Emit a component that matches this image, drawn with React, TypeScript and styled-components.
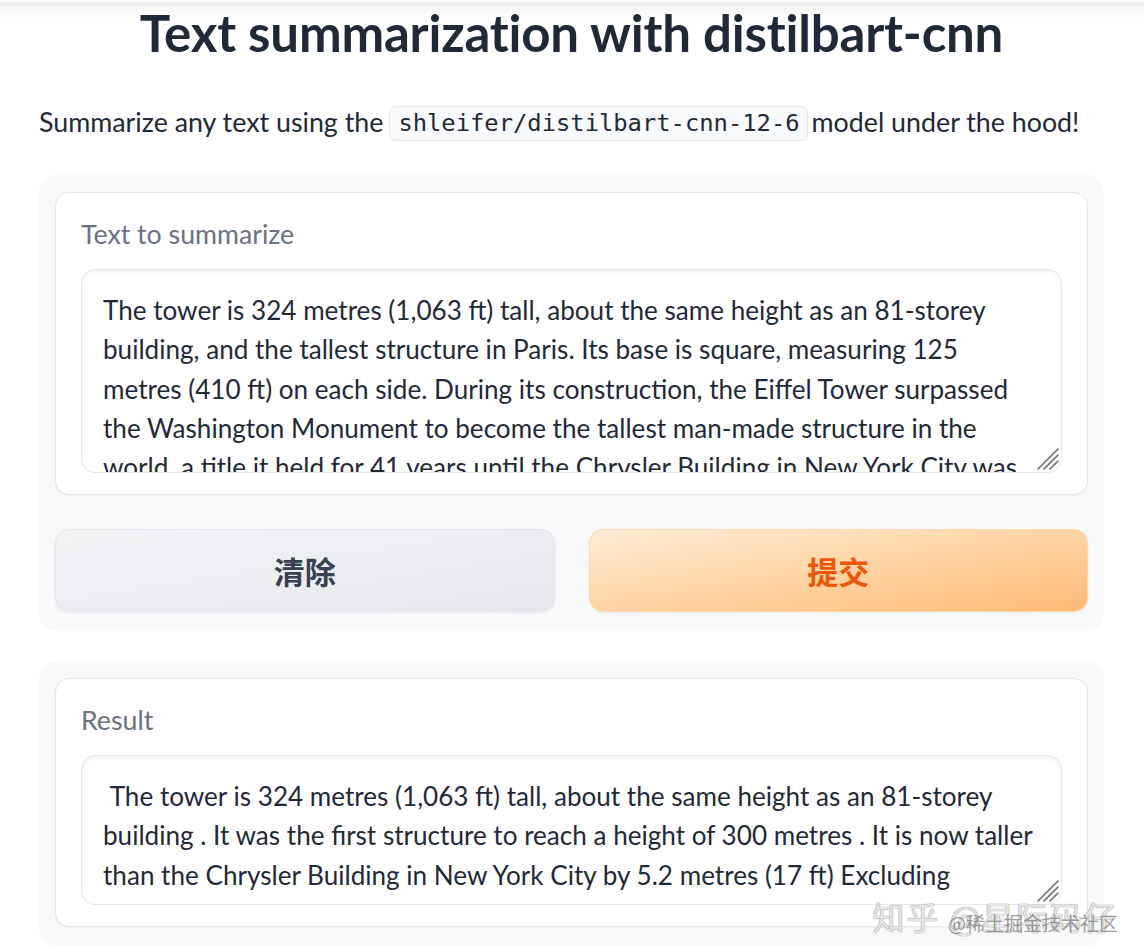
import React from "react";
import styled, { createGlobalStyle } from "styled-components";

const Global = createGlobalStyle`
  html, body { margin: 0; padding: 0; background: #ffffff; }
  body {
    font-family: "Lato", "Noto Sans CJK SC", sans-serif;
    color: #1f2937;
    -webkit-font-smoothing: antialiased;
  }
`;

const Page = styled.div`
  width: 1144px;
  min-height: 952px;
  box-sizing: border-box;
  padding: 0 40px 0 39px;
  background: linear-gradient(to bottom, #ffffff 0px, #ffffff 2px, #e9e9ea 3px, #f6f6f7 8px, #ffffff 18px);
  overflow: hidden;
`;

const Title = styled.h1`
  margin: 0;
  padding-top: 3px;
  text-align: center;
  font-family: "Lato", sans-serif;
  font-weight: 700;
  font-size: 51px;
  line-height: 60px;
  color: #1f2937;
  letter-spacing: -0.2px;
`;

const Subtitle = styled.p`
  margin: 40px 0 0;
  text-align: left;
  font-size: 26.8px;
  line-height: 38px;
  color: #1f2937;
`;

const Code = styled.code`
  display: inline-block;
  font-family: "DejaVu Sans Mono", "Liberation Mono", monospace;
  font-size: 23.8px;
  line-height: 33px;
  padding: 0 7px 0 8px;
  margin: 0 4px 0 6px;
  background: #f9fafb;
  border: 1px solid #e5e7eb;
  border-radius: 7px;
  color: #1f2937;
  vertical-align: 1px;
`;

const Panel = styled.section<{ $mt: number }>`
  position: relative;
  margin-top: ${(p) => p.$mt}px;
  background: #f8f9fb;
  border-radius: 18px;
  padding: 17px 16px 19px;
  display: flex;
  flex-direction: column;
  gap: 34px;
`;

const Card = styled.div`
  background: #ffffff;
  border: 1px solid #e5e7eb;
  border-radius: 14px;
  padding: 24px 25px 21px;
  box-shadow: 0 1px 2px rgba(0, 0, 0, 0.04);
  display: flex;
  flex-direction: column;
  gap: 18px;
`;

const Label = styled.span`
  font-size: 26.7px;
  line-height: 34px;
  color: #6b7280;
`;

const Field = styled.div`
  position: relative;
`;

const TextArea = styled.textarea<{ $h: number; $pr: number }>`
  display: block;
  width: 100%;
  height: ${(p) => p.$h}px;
  box-sizing: border-box;
  margin: 0;
  padding: 21px ${(p) => p.$pr}px 8px 21px;
  border: 1px solid #e5e7eb;
  border-radius: 14px;
  background: #ffffff;
  box-shadow: inset 0 2px 4px rgba(0, 0, 0, 0.05);
  font-family: "Lato", sans-serif;
  font-size: 26.1px;
  line-height: 39.3px;
  color: #1f2937;
  resize: none;
  overflow: hidden;
  outline: none;
`;

const Grip = styled.svg`
  position: absolute;
  right: 2px;
  bottom: 2px;
  width: 26px;
  height: 26px;
  pointer-events: none;
`;

const ButtonRow = styled.div`
  display: grid;
  grid-template-columns: 1fr 1fr;
  gap: 34px;
`;

const Button = styled.button<{ $primary?: boolean }>`
  height: 83px;
  border-radius: 14px;
  font-family: "Noto Sans CJK SC", sans-serif;
  font-weight: 700;
  font-size: 31px;
  cursor: pointer;
  border: 1px solid ${(p) => (p.$primary ? "#fed7aa" : "#e5e7eb")};
  color: ${(p) => (p.$primary ? "#ea580c" : "#374151")};
  background: ${(p) =>
    p.$primary
      ? "linear-gradient(to bottom right, #ffedd5, #fdba74)"
      : "linear-gradient(to bottom right, #f3f4f6, #e5e7eb)"};
  box-shadow: 0 1px 3px rgba(0, 0, 0, 0.06);
`;

const Watermark = styled.div`
  position: absolute;
  right: -14px;
  bottom: 12px;
  pointer-events: none;
  display: flex;
  align-items: flex-end;
  font-family: "Noto Sans CJK SC", sans-serif;
`;

const WmMain = styled.span`
  font-size: 32px;
  line-height: 36px;
  color: rgba(255, 255, 255, 0.8);
  text-shadow: 0 0 1px #8a8a8a, 0 0 1px #8a8a8a;
  letter-spacing: 2px;
`;

const WmSub = styled.span`
  position: absolute;
  right: 0;
  bottom: 0;
  font-size: 19px;
  line-height: 22px;
  color: rgba(130, 130, 130, 0.8);
`;

const ResizeGrip = () => (
  <Grip viewBox="0 0 26 26">
    <path d="M4 24 L24 4 M10 24 L24 10 M16 24 L24 16" stroke="#6b6b6b" strokeWidth="1.6" strokeLinecap="round" fill="none" />
  </Grip>
);

const SOURCE =
  "The tower is 324 metres (1,063 ft) tall, about the same height as an 81-storey building, and the tallest structure in Paris. Its base is square, measuring 125 metres (410 ft) on each side. During its construction, the Eiffel Tower surpassed the Washington Monument to become the tallest man-made structure in the world, a title it held for 41 years until the Chrysler Building in New York City was finished in 1930. It was the first structure to reach a height of 300 metres. Due to the addition of a broadcasting aerial at the top of the tower in 1957, it is now taller than the Chrysler Building by 5.2 metres (17 ft). Excluding transmitters, the Eiffel Tower is the second tallest free-standing structure in France after the Millau Viaduct.";

const RESULT =
  " The tower is 324 metres (1,063 ft) tall, about the same height as an 81-storey building . It was the first structure to reach a height of 300 metres . It is now taller than the Chrysler Building in New York City by 5.2 metres (17 ft) Excluding transmitters, the Eiffel Tower is the second tallest free-standing structure in France .";

export default function App() {
  return (
    <>
      <Global />
      <Page>
        <Title>Text summarization with distilbart-cnn</Title>
        <Subtitle>
          Summarize any text using the<Code>shleifer/distilbart-cnn-12-6</Code>model under the hood!
        </Subtitle>
        <Panel $mt={34}>
          <Card>
            <Label>Text to summarize</Label>
            <Field>
              <TextArea $h={204} $pr={36} defaultValue={SOURCE} />
              <ResizeGrip />
            </Field>
          </Card>
          <ButtonRow>
            <Button>清除</Button>
            <Button $primary>提交</Button>
          </ButtonRow>
        </Panel>
        <Panel $mt={30}>
          <Card>
            <Label>Result</Label>
            <Field>
              <TextArea $h={150} $pr={16} defaultValue={RESULT} readOnly />
              <ResizeGrip />
            </Field>
          </Card>
          <Watermark>
            <WmMain>知乎 @星际码仔</WmMain>
            <WmSub>@稀土掘金技术社区</WmSub>
          </Watermark>
        </Panel>
      </Page>
    </>
  );
}
